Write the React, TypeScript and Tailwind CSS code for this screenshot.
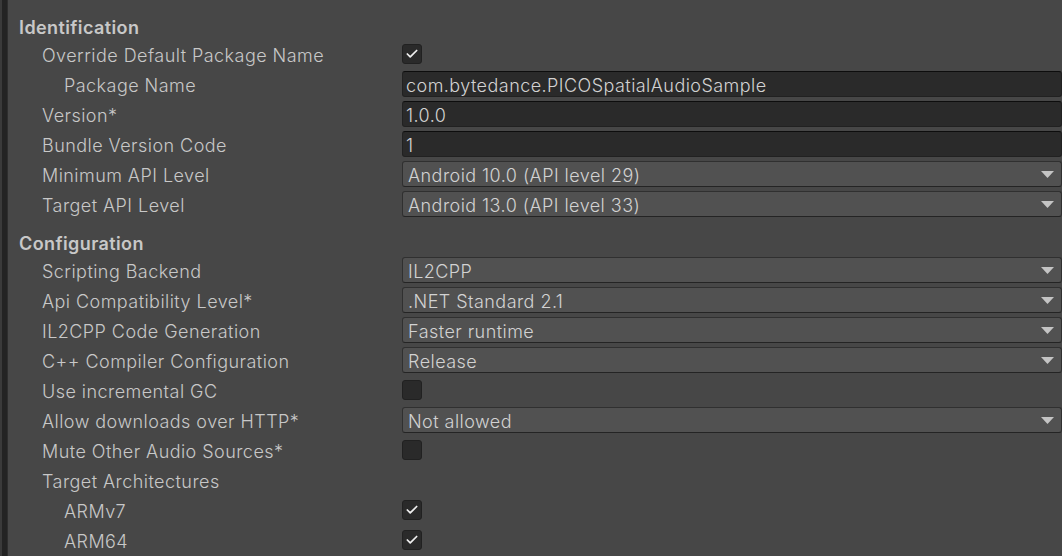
import { Check } from "lucide-react"

type Row =
  | { kind: "header"; label: string }
  | { kind: "check"; label: string; checked: boolean; indent?: number }
  | { kind: "text"; label: string; value: string; indent?: number }
  | { kind: "select"; label: string; value: string; indent?: number }
  | { kind: "label"; label: string; indent?: number }

const ROWS: Row[] = [
  { kind: "header", label: "Identification" },
  { kind: "check", label: "Override Default Package Name", checked: true },
  { kind: "text", label: "Package Name", value: "com.bytedance.PICOSpatialAudioSample", indent: 1 },
  { kind: "text", label: "Version*", value: "1.0.0" },
  { kind: "text", label: "Bundle Version Code", value: "1" },
  { kind: "select", label: "Minimum API Level", value: "Android 10.0 (API level 29)" },
  { kind: "select", label: "Target API Level", value: "Android 13.0 (API level 33)" },
  { kind: "header", label: "Configuration" },
  { kind: "select", label: "Scripting Backend", value: "IL2CPP" },
  { kind: "select", label: "Api Compatibility Level*", value: ".NET Standard 2.1" },
  { kind: "select", label: "IL2CPP Code Generation", value: "Faster runtime" },
  { kind: "select", label: "C++ Compiler Configuration", value: "Release" },
  { kind: "check", label: "Use incremental GC", checked: false },
  { kind: "select", label: "Allow downloads over HTTP*", value: "Not allowed" },
  { kind: "check", label: "Mute Other Audio Sources*", checked: false },
  { kind: "label", label: "Target Architectures" },
  { kind: "check", label: "ARMv7", checked: true, indent: 1 },
  { kind: "check", label: "ARM64", checked: true, indent: 1 },
]

function Checkbox({ checked }: { checked: boolean }) {
  return (
    <div className="w-[20px] h-[20px] rounded-[3px] bg-[#2a2a2a] border border-[#212121] flex items-center justify-center">
      {checked && <Check className="w-[14px] h-[14px] text-[#eeeeee]" strokeWidth={3} />}
    </div>
  )
}

function Arrow() {
  return (
    <svg width="13" height="7" viewBox="0 0 13 7" className="shrink-0">
      <path d="M0 0 L13 0 L6.5 7 Z" fill="#c4c4c4" />
    </svg>
  )
}

function Field({ row }: { row: Row }) {
  if (row.kind === "check") return <Checkbox checked={row.checked} />
  if (row.kind === "text")
    return (
      <div className="h-[26px] flex-1 rounded-[3px] bg-[#2a2a2a] border border-[#212121] border-t-[#0d0d0d] flex items-center px-[3px] pt-[3px] text-[#d2d2d2]">
        {row.value}
      </div>
    )
  if (row.kind === "select")
    return (
      <div className="h-[26px] flex-1 rounded-[3px] bg-[#515151] border border-[#303030] border-b-[#242424] flex items-center justify-between pl-[5px] pr-[7px] text-[#d2d2d2]">
        <span className="pt-[3px]">{row.value}</span>
        <Arrow />
      </div>
    )
  return null
}

export default function App() {
  return (
    <div
      className="w-[1062px] h-[556px] bg-[#474747] flex overflow-hidden"
      style={{ fontFamily: "Inter, 'Noto Sans', sans-serif" }}
    >
      <div className="w-[2px] bg-[#3a3a3a]" />
      <div className="w-[5px] bg-[#232323]" />
      <div className="w-[1px] bg-[#2e2e2e]" />
      <div className="flex-1 pt-[11px] text-[18px] font-light text-[#c8c8c8] tracking-[0.45px]">
        {ROWS.map((row, i) =>
          row.kind === "header" ? (
            <div key={i} className={`h-[28px] flex items-center pl-[11px] pt-[4px] font-semibold tracking-[0.4px] ${i > 0 ? "mt-[8px]" : ""}`}>
              {row.label}
            </div>
          ) : (
            <div key={i} className="h-[30px] flex items-center">
              <div className={`w-[394px] shrink-0 pt-[2px] ${row.indent ? "pl-[56px]" : "pl-[34px]"}`}>{row.label}</div>
              <Field row={row} />
            </div>
          ),
        )}
      </div>
    </div>
  )
}
